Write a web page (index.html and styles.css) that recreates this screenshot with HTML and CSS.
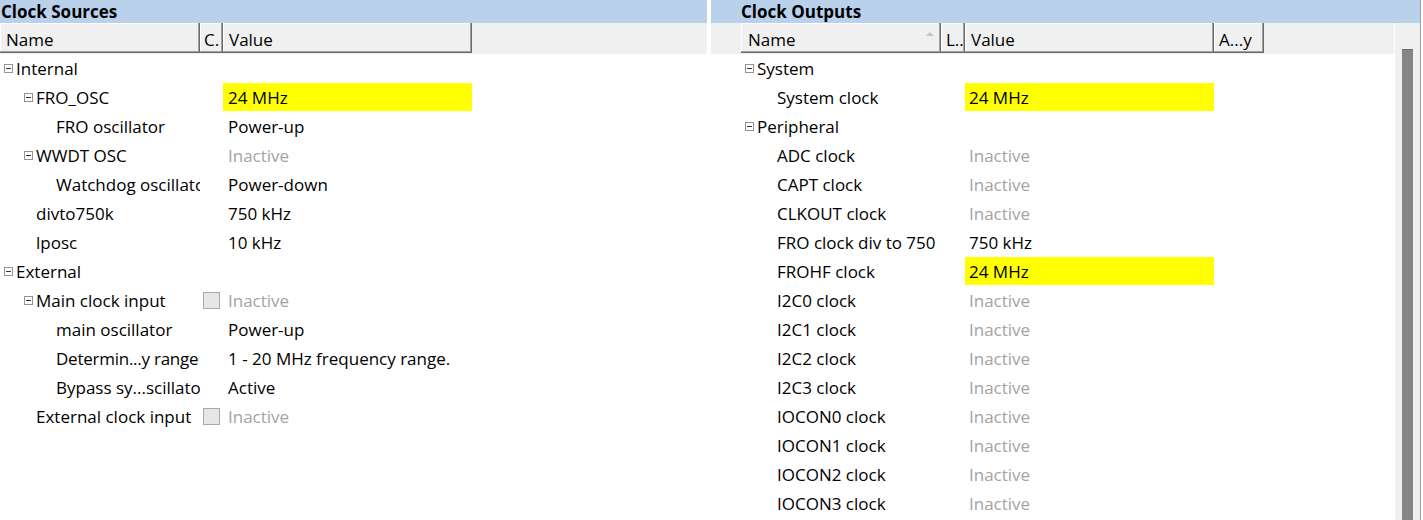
FILE: index.html
```html
<!DOCTYPE html>
<html>
<head>
<meta charset="utf-8">
<title>Clocks</title>
<link rel="stylesheet" href="styles.css">
</head>
<body>
<div class="app">
  <section class="panel panel-left">
    <div class="title">Clock Sources</div>
    <div class="panel-body">
      <div class="table">
        <div class="hdr">
          <div class="hc l-name">Name</div>
          <div class="hc l-chk">C.</div>
          <div class="hc l-val">Value</div>
        </div>
        <div class="row">
          <div class="cell l-name lvl0"><span class="exp"></span><span class="txt">Internal</span></div>
          <div class="cell l-chk"></div>
          <div class="cell l-val"></div>
        </div>
        <div class="row">
          <div class="cell l-name lvl1"><span class="exp"></span><span class="txt">FRO_OSC</span></div>
          <div class="cell l-chk"></div>
          <div class="cell l-val hl">24 MHz</div>
        </div>
        <div class="row">
          <div class="cell l-name lvl2"><span class="noexp"></span><span class="txt">FRO oscillator</span></div>
          <div class="cell l-chk"></div>
          <div class="cell l-val">Power-up</div>
        </div>
        <div class="row">
          <div class="cell l-name lvl1"><span class="exp"></span><span class="txt">WWDT OSC</span></div>
          <div class="cell l-chk"></div>
          <div class="cell l-val off">Inactive</div>
        </div>
        <div class="row">
          <div class="cell l-name lvl2"><span class="noexp"></span><span class="txt">Watchdog oscillator</span></div>
          <div class="cell l-chk"></div>
          <div class="cell l-val">Power-down</div>
        </div>
        <div class="row">
          <div class="cell l-name lvl1"><span class="noexp"></span><span class="txt">divto750k</span></div>
          <div class="cell l-chk"></div>
          <div class="cell l-val">750 kHz</div>
        </div>
        <div class="row">
          <div class="cell l-name lvl1"><span class="noexp"></span><span class="txt">lposc</span></div>
          <div class="cell l-chk"></div>
          <div class="cell l-val">10 kHz</div>
        </div>
        <div class="row">
          <div class="cell l-name lvl0"><span class="exp"></span><span class="txt">External</span></div>
          <div class="cell l-chk"></div>
          <div class="cell l-val"></div>
        </div>
        <div class="row">
          <div class="cell l-name lvl1"><span class="exp"></span><span class="txt">Main clock input</span></div>
          <div class="cell l-chk"><span class="box"></span></div>
          <div class="cell l-val off">Inactive</div>
        </div>
        <div class="row">
          <div class="cell l-name lvl2"><span class="noexp"></span><span class="txt">main oscillator</span></div>
          <div class="cell l-chk"></div>
          <div class="cell l-val">Power-up</div>
        </div>
        <div class="row">
          <div class="cell l-name lvl2"><span class="noexp"></span><span class="txt fit">Determin...y range</span></div>
          <div class="cell l-chk"></div>
          <div class="cell l-val">1 - 20 MHz frequency range.</div>
        </div>
        <div class="row">
          <div class="cell l-name lvl2"><span class="noexp"></span><span class="txt">Bypass sy...scillator</span></div>
          <div class="cell l-chk"></div>
          <div class="cell l-val">Active</div>
        </div>
        <div class="row">
          <div class="cell l-name lvl1"><span class="noexp"></span><span class="txt">External clock input</span></div>
          <div class="cell l-chk"><span class="box"></span></div>
          <div class="cell l-val off">Inactive</div>
        </div>
      </div>
    </div>
  </section>

  <section class="panel panel-right">
    <div class="title title-right">Clock Outputs</div>
    <div class="panel-body">
      <div class="table">
        <div class="hdr">
          <div class="spacer"></div>
          <div class="hc r-name">Name<span class="sort"></span></div>
          <div class="hc r-l">L..</div>
          <div class="hc r-val">Value</div>
          <div class="hc r-a">A...y</div>
        </div>
        <div class="row"><div class="spacer"></div><div class="cell r-name lvl0"><span class="exp"></span><span class="txt">System</span></div><div class="cell r-l"></div><div class="cell r-val"></div></div>
        <div class="row"><div class="spacer"></div><div class="cell r-name lvl1"><span class="noexp"></span><span class="txt">System clock</span></div><div class="cell r-l"></div><div class="cell r-val hl">24 MHz</div></div>
        <div class="row"><div class="spacer"></div><div class="cell r-name lvl0"><span class="exp"></span><span class="txt">Peripheral</span></div><div class="cell r-l"></div><div class="cell r-val"></div></div>
        <div class="row"><div class="spacer"></div><div class="cell r-name lvl1"><span class="noexp"></span><span class="txt">ADC clock</span></div><div class="cell r-l"></div><div class="cell r-val off">Inactive</div></div>
        <div class="row"><div class="spacer"></div><div class="cell r-name lvl1"><span class="noexp"></span><span class="txt">CAPT clock</span></div><div class="cell r-l"></div><div class="cell r-val off">Inactive</div></div>
        <div class="row"><div class="spacer"></div><div class="cell r-name lvl1"><span class="noexp"></span><span class="txt">CLKOUT clock</span></div><div class="cell r-l"></div><div class="cell r-val off">Inactive</div></div>
        <div class="row"><div class="spacer"></div><div class="cell r-name lvl1"><span class="noexp"></span><span class="txt">FRO clock div to 750</span></div><div class="cell r-l"></div><div class="cell r-val">750 kHz</div></div>
        <div class="row"><div class="spacer"></div><div class="cell r-name lvl1"><span class="noexp"></span><span class="txt">FROHF clock</span></div><div class="cell r-l"></div><div class="cell r-val hl">24 MHz</div></div>
        <div class="row"><div class="spacer"></div><div class="cell r-name lvl1"><span class="noexp"></span><span class="txt">I2C0 clock</span></div><div class="cell r-l"></div><div class="cell r-val off">Inactive</div></div>
        <div class="row"><div class="spacer"></div><div class="cell r-name lvl1"><span class="noexp"></span><span class="txt">I2C1 clock</span></div><div class="cell r-l"></div><div class="cell r-val off">Inactive</div></div>
        <div class="row"><div class="spacer"></div><div class="cell r-name lvl1"><span class="noexp"></span><span class="txt">I2C2 clock</span></div><div class="cell r-l"></div><div class="cell r-val off">Inactive</div></div>
        <div class="row"><div class="spacer"></div><div class="cell r-name lvl1"><span class="noexp"></span><span class="txt">I2C3 clock</span></div><div class="cell r-l"></div><div class="cell r-val off">Inactive</div></div>
        <div class="row"><div class="spacer"></div><div class="cell r-name lvl1"><span class="noexp"></span><span class="txt">IOCON0 clock</span></div><div class="cell r-l"></div><div class="cell r-val off">Inactive</div></div>
        <div class="row"><div class="spacer"></div><div class="cell r-name lvl1"><span class="noexp"></span><span class="txt">IOCON1 clock</span></div><div class="cell r-l"></div><div class="cell r-val off">Inactive</div></div>
        <div class="row"><div class="spacer"></div><div class="cell r-name lvl1"><span class="noexp"></span><span class="txt">IOCON2 clock</span></div><div class="cell r-l"></div><div class="cell r-val off">Inactive</div></div>
        <div class="row"><div class="spacer"></div><div class="cell r-name lvl1"><span class="noexp"></span><span class="txt">IOCON3 clock</span></div><div class="cell r-l"></div><div class="cell r-val off">Inactive</div></div>
      </div>
      <div class="scrollbar"><div class="thumb"></div></div>
    </div>
  </section>
</div>
</body>
</html>
```

FILE: styles.css
```css
* { box-sizing: border-box; }

html, body {
  margin: 0;
  padding: 0;
  background: #ffffff;
  overflow: hidden;
}

body {
  font-family: "Open Sans", "Noto Sans", "Liberation Sans", sans-serif;
  font-size: 17px;
  color: #000000;
  width: 1423px;
  height: 520px;
}

.app {
  display: flex;
  gap: 4px;
  height: 520px;
}

.panel {
  display: flex;
  flex-direction: column;
  height: 520px;
  overflow: hidden;
}

.panel-left { width: 707px; }

.panel-right {
  width: 710px;
  border-right: 1px solid #a0a0a0;
}

.title {
  height: 23px;
  flex: none;
  background: #b9d1ea;
  font-weight: 700;
  font-size: 17px;
  line-height: 23px;
  padding-left: 1px;
  white-space: nowrap;
}

.title-right { padding-left: 30px; }

.panel-body {
  flex: 1;
  display: flex;
  min-height: 0;
}

.table {
  flex: 1;
  display: flex;
  flex-direction: column;
  min-width: 0;
}

.hdr {
  flex: none;
  display: flex;
  align-items: flex-start;
  height: 31px;
  background: #f0f0f0;
}

.hc {
  height: 30px;
  display: flex;
  align-items: center;
  padding-left: 6px;
  padding-top: 3px;
  border-right: 1px solid #6a6a6a;
  border-bottom: 1px solid #6a6a6a;
  box-shadow: inset -1px -1px 0 #a0a0a0, inset 1px 1px 0 #ffffff;
  background: #f0f0f0;
  white-space: nowrap;
  overflow: hidden;
}

.l-name { width: 200px; }
.l-chk { width: 23px; }
.l-val { width: 249px; }

.spacer { width: 30px; flex: none; }
.r-name { width: 200px; }
.r-l { width: 24px; }
.r-val { width: 249px; }
.r-a { width: 50px; }

.hc.l-chk { padding-left: 4px; }
.hc.r-l { padding-left: 5px; }
.hc.r-a { padding-left: 5px; }
.hc.r-name { padding-left: 7px; }

.sort {
  margin-left: auto;
  margin-right: 6px;
  margin-bottom: 10px;
  width: 0;
  height: 0;
  border-left: 4px solid transparent;
  border-right: 4px solid transparent;
  border-bottom: 4px solid #c4c4c4;
}

.row {
  flex: none;
  display: flex;
  height: 29px;
  line-height: 29px;
}

.cell {
  flex: none;
  display: flex;
  align-items: center;
  white-space: nowrap;
  overflow: hidden;
  height: 29px;
}

.lvl0 { padding-left: 0; }
.lvl1 { padding-left: 20px; }
.lvl2 { padding-left: 40px; }

.exp {
  flex: none;
  width: 9px;
  height: 9px;
  margin: 0 3px 0 4px;
  border: 1px solid #939393;
  display: flex;
  align-items: center;
  justify-content: center;
}

.exp::after {
  content: "";
  width: 5px;
  height: 1px;
  background: #333333;
}

.noexp {
  flex: none;
  width: 16px;
}

.txt { white-space: nowrap; }

.fit { letter-spacing: -0.25px; }

.cell.l-val { padding-left: 5px; }
.cell.r-val { padding-left: 4px; }

.hl {
  background: #ffff00;
  height: 28px;
  align-self: flex-start;
}

.off { color: #a3a3a3; }

.cell.l-chk { padding-left: 3px; }

.box {
  width: 17px;
  height: 17px;
  border: 1px solid #a8a8a8;
  background: #e6e6e6;
  margin-top: -1px;
}

.scrollbar {
  flex: none;
  width: 26px;
  border-left: 1px solid #ffffff;
  background: #f0f0f0;
  padding-left: 7px;
  padding-top: 26px;
}

.thumb {
  width: 11px;
  height: 600px;
  background: #858585;
  border-top: 1px solid #6e6e6e;
}
```
